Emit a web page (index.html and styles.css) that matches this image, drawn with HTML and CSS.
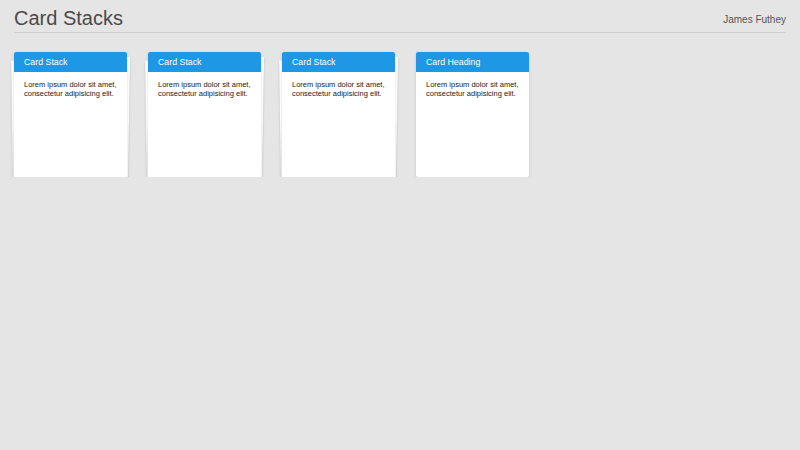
FILE: index.html
```html
<!DOCTYPE html>
<html>
<head>
  <title>Card Stacks</title>
  <link rel="stylesheet" href="styles.css">
</head>
<body>
  <header class="page-header">
    <h1>Card Stacks</h1>
    <div class="author">James Futhey</div>
  </header>

  <div class="cards">
    <div class="stack">
      <div class="sheet sheet-back"></div>
      <div class="sheet sheet-mid"></div>
      <div class="card">
        <div class="card-heading">Card Stack</div>
        <div class="card-body">Lorem ipsum dolor sit amet, consectetur adipisicing elit.</div>
      </div>
    </div>
    <div class="stack">
      <div class="sheet sheet-back"></div>
      <div class="sheet sheet-mid"></div>
      <div class="card">
        <div class="card-heading">Card Stack</div>
        <div class="card-body">Lorem ipsum dolor sit amet, consectetur adipisicing elit.</div>
      </div>
    </div>
    <div class="stack">
      <div class="sheet sheet-back"></div>
      <div class="sheet sheet-mid"></div>
      <div class="card">
        <div class="card-heading">Card Stack</div>
        <div class="card-body">Lorem ipsum dolor sit amet, consectetur adipisicing elit.</div>
      </div>
    </div>
    <div class="stack">
      <div class="card">
        <div class="card-heading">Card Heading</div>
        <div class="card-body">Lorem ipsum dolor sit amet, consectetur adipisicing elit.</div>
      </div>
    </div>
  </div>
</body>
</html>
```

FILE: styles.css
```css
body {
  font-family: "Liberation Sans", Arial, sans-serif;
  background-color: #e5e5e5;
  color: #222;
  margin: 0;
  padding: 0 14px;
}
.page-header {
  display: flex;
  justify-content: space-between;
  align-items: flex-end;
  border-bottom: 1px solid #cfcfcf;
  height: 31px;
  padding-bottom: 1px;
}
.page-header h1 {
  margin: 0;
  font-size: 20px;
  font-weight: normal;
  color: #4a4a4a;
  line-height: 26px;
}
.author {
  font-size: 10px;
  color: #555;
  line-height: 14px;
  padding-bottom: 4px;
}
.cards {
  display: flex;
  align-items: flex-start;
  gap: 21px;
  margin-top: 19px;
}
.stack {
  display: grid;
  width: 113px;
  height: 125px;
}
.stack > * {
  grid-area: 1 / 1;
}
.sheet {
  align-self: start;
  background-color: white;
  box-shadow: 0 1px 2px rgba(0,0,0,0.22);
}
.sheet-back {
  height: 121px;
  margin: 8px 2px 0 -2px;
  transform: rotate(-0.8deg);
}
.sheet-mid {
  height: 123px;
  margin: 4px -2px 0 1px;
  transform: rotate(1deg);
}
.card {
  position: relative;
  background-color: white;
  border-radius: 2px;
  box-shadow: 0 1px 3px rgba(0,0,0,0.15);
}
.card-heading {
  background-color: #1e98e4;
  color: white;
  font-size: 8.8px;
  height: 20px;
  line-height: 20px;
  padding: 0 10px;
  border-radius: 2px 2px 0 0;
}
.card-body {
  font-size: 7.5px;
  line-height: 9px;
  padding: 8px 4px 8px 10px;
}
```
